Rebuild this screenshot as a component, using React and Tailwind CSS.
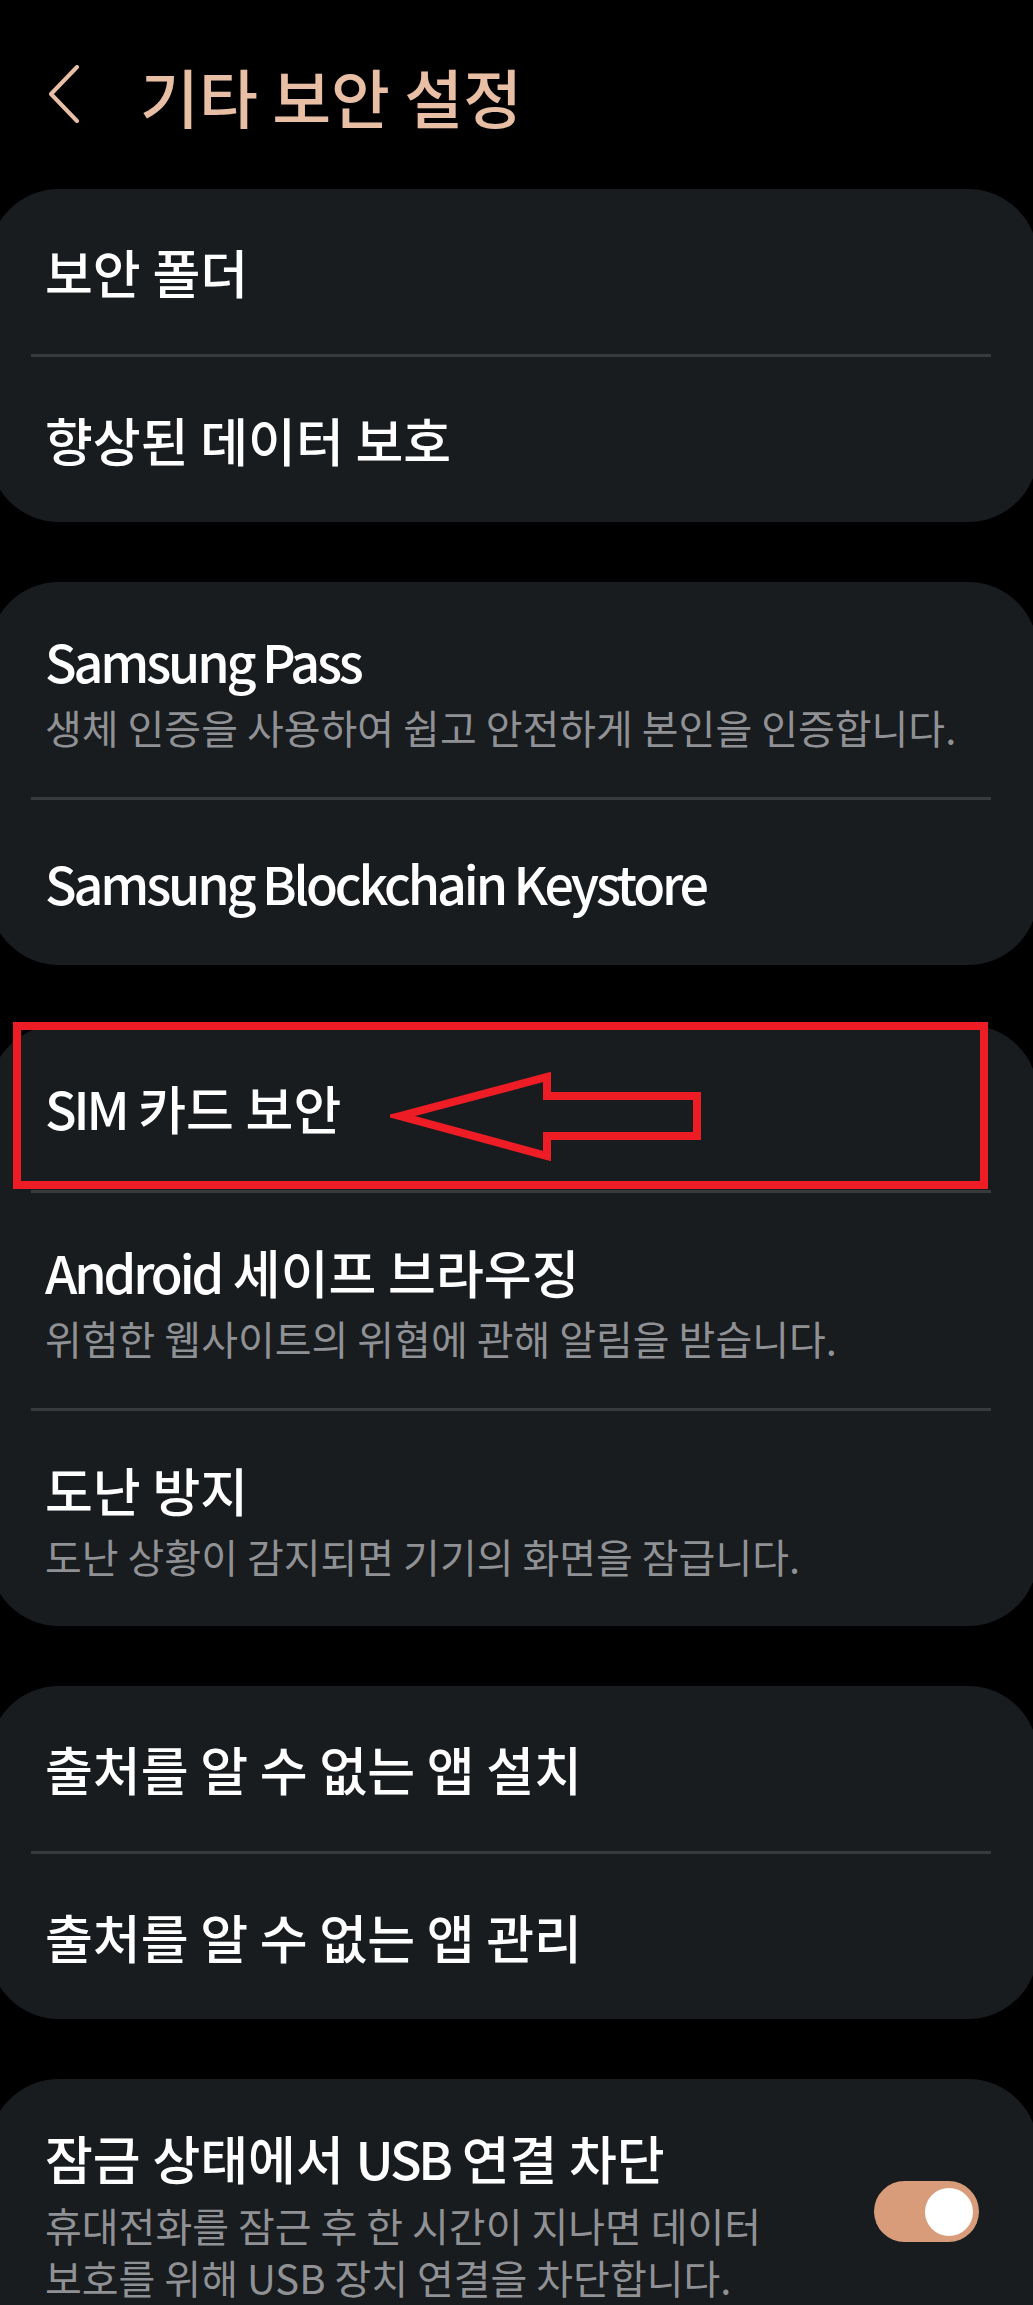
import React from "react";

const font = "font-['Noto_Sans_CJK_KR','Noto_Sans',sans-serif]";

function Latin({ children }) {
  return <span className="tracking-[-0.06em]">{children}</span>;
}

function Row({ title, subtitle, children }) {
  return (
    <div
      className={`relative flex items-center pl-[56px] pr-[47px] ${
        subtitle ? "py-[41px]" : "py-[45px]"
      }`}
    >
      <div className="flex-1">
        <div className="text-[52px] leading-[75px] font-medium text-white">{title}</div>
        {subtitle && (
          <div className="text-[40px] leading-[58px] text-[#909195]">{subtitle}</div>
        )}
      </div>
      {children}
    </div>
  );
}

function Divider() {
  return <div className="ml-[42px] mr-[47px] h-[3px] bg-[#393a3c]"></div>;
}

function Card({ children, className = "" }) {
  return (
    <div className={`ml-[-11px] w-[1049px] rounded-[70px] bg-[#181c1f] ${className}`}>
      {children}
    </div>
  );
}

function Toggle() {
  return (
    <div className="mr-[12px] flex h-[61px] w-[105px] shrink-0 items-center justify-end rounded-full bg-[#d99c7b] pr-[6px]">
      <div className="h-[48px] w-[48px] rounded-full bg-white"></div>
    </div>
  );
}

export default function App() {
  return (
    <div className={`h-[2305px] w-full overflow-hidden bg-black ${font}`}>
      <div className="flex h-[189px] items-center pl-[47px]">
        <svg width="36" height="58" viewBox="0 0 36 58" className="mt-[-2px]">
          <polyline
            points="30,2 4,29 30,56"
            fill="none"
            stroke="#e8bfa5"
            strokeWidth="4"
            strokeLinecap="round"
            strokeLinejoin="round"
          />
        </svg>
        <h1 className="ml-[57px] text-[64px] font-medium text-[#e8bfa5]">기타 보안 설정</h1>
      </div>

      <Card>
        <Row title="보안 폴더" />
        <Divider />
        <Row title="향상된 데이터 보호" />
      </Card>

      <Card className="mt-[60px]">
        <Row
          title={<Latin>Samsung Pass</Latin>}
          subtitle="생체 인증을 사용하여 쉽고 안전하게 본인을 인증합니다."
        />
        <Divider />
        <Row title={<Latin>Samsung Blockchain Keystore</Latin>} />
      </Card>

      <Card className="mt-[60px]">
        <Row title={<><Latin>SIM</Latin> 카드 보안</>}>
          <div className="absolute left-[24px] right-[50px] top-[-3px] bottom-[1px] border-[8px] border-[#ee1c25]"></div>
          <svg
            width="315"
            height="95"
            viewBox="0 0 315 95"
            className="absolute left-[401px] top-[44px]"
          >
            <polygon
              points="10,47 157,8 157,27 307,27 307,67 157,67 157,87"
              fill="none"
              stroke="#ee1c25"
              strokeWidth="8"
              strokeLinejoin="miter"
            />
          </svg>
        </Row>
        <Divider />
        <Row
          title={<><Latin>Android</Latin> 세이프 브라우징</>}
          subtitle="위험한 웹사이트의 위협에 관해 알림을 받습니다."
        />
        <Divider />
        <Row title="도난 방지" subtitle="도난 상황이 감지되면 기기의 화면을 잠급니다." />
      </Card>

      <Card className="mt-[60px]">
        <Row title="출처를 알 수 없는 앱 설치" />
        <Divider />
        <Row title="출처를 알 수 없는 앱 관리" />
      </Card>

      <Card className="mt-[60px] pb-[40px]">
        <div className="flex items-center pl-[56px] pr-[47px] py-[41px]">
          <div className="w-[770px]">
            <div className="text-[52px] leading-[75px] font-medium text-white">
              잠금 상태에서 <Latin>USB</Latin> 연결 차단
            </div>
            <div className="mt-[4px] break-keep text-[40px] leading-[52px] text-[#909195]">
              휴대전화를 잠근 후 한 시간이 지나면 데이터 보호를 위해 USB 장치 연결을 차단합니다.
            </div>
          </div>
          <div className="flex-1"></div>
          <Toggle />
        </div>
      </Card>
    </div>
  );
}
